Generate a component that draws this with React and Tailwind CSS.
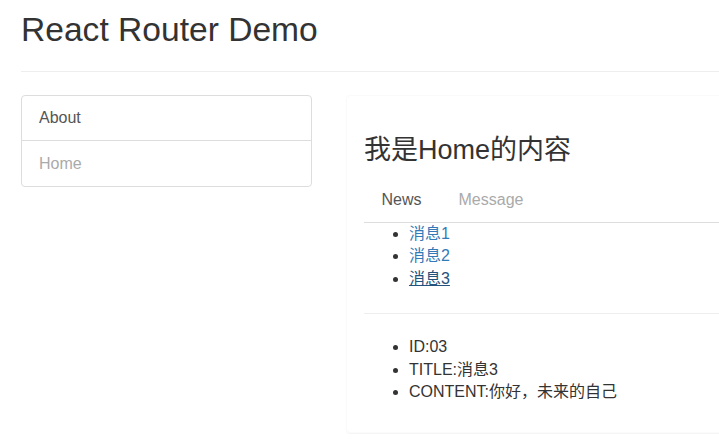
import React from "react";

const font = "font-['Liberation_Sans','Noto_Sans_CJK_SC',sans-serif]";

export default function App() {
  const news = ["消息1", "消息2", "消息3"];

  return (
    <div className={`w-[719px] h-[447px] overflow-hidden bg-white text-[#333] ${font}`}>
      <div className="w-[1000px] pl-[21px]">
        {/* page header */}
        <div className="pt-[11px] pb-[23px] border-b border-[#eee]">
          <h2 className="text-[33.6px] leading-[37px] font-normal">React Router Demo</h2>
        </div>

        <div className="flex items-start mt-[23px]">
          {/* sidebar */}
          <div className="w-[291px] shrink-0 border border-[#ddd] rounded-[4px] text-[16px]">
            <a className="flex items-center h-[45px] pl-[17px] text-[#555] border-b border-[#ddd]">About</a>
            <a className="flex items-center h-[45px] pl-[17px] text-[#aaa]">Home</a>
          </div>

          {/* panel */}
          <div className="ml-[34px] w-[600px] border border-[#fafafa] rounded-[4px] shadow-[0_1px_1px_rgba(0,0,0,0.04)]">
            <div className="px-[17px] pt-[17px] pb-[19px]">
              <h2 className="mt-[22px] text-[27px] leading-[30px] font-normal">我是Home的内容</h2>

              <ul className="mt-[11px] flex border-b border-[#ddd] text-[16px]">
                <li className="mr-[2px]">
                  <a className="flex items-center h-[46px] px-[16.5px] border border-transparent border-b-0 text-[#555]">News</a>
                </li>
                <li className="mr-[2px]">
                  <a className="flex items-center h-[46px] px-[16.5px] border border-transparent border-b-0 text-[#aaa]">Message</a>
                </li>
              </ul>

              <ul className="list-disc pl-[45px] text-[16px] leading-[22.4px]">
                {news.map((n, i) => (
                  <li key={n}>
                    <a className={i === 2 ? "text-[#23527c] underline" : "text-[#337ab7]"}>{n}</a>
                  </li>
                ))}
              </ul>

              <hr className="mt-[23px] mb-[22px] border-0 border-t border-[#eee]" />

              <ul className="list-disc pl-[45px] mb-[10px] text-[16px] leading-[22.4px]">
                <li>ID:03</li>
                <li>TITLE:消息3</li>
                <li>CONTENT:你好，未来的自己</li>
              </ul>
            </div>
          </div>
        </div>
      </div>
    </div>
  );
}
